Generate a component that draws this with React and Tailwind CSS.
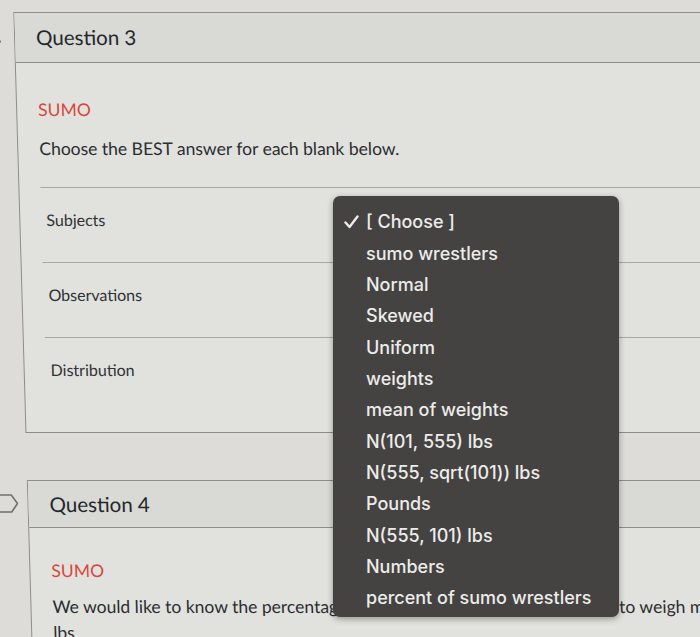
const MENU_ITEMS = [
  '[ Choose ]',
  'sumo wrestlers',
  'Normal',
  'Skewed',
  'Uniform',
  'weights',
  'mean of weights',
  'N(101, 555) lbs',
  'N(555, sqrt(101)) lbs',
  'Pounds',
  'N(555, 101) lbs',
  'Numbers',
  'percent of sumo wrestlers',
];

const ROWS = ['Subjects', 'Observations', 'Distribution'];

function Flag({ className }) {
  return (
    <svg width="30" height="19" viewBox="0 0 30 19" className={className}>
      <path d="M1 2.5 Q1 1 2.5 1 L23 1 L29 9.5 L23 18 L2.5 18 Q1 18 1 16.5 Z" fill="none" stroke="#6f6f6c" strokeWidth="1.6" />
    </svg>
  );
}

function QuestionHeader({ title, h }) {
  return (
    <div className={`${h} flex items-center px-[21px] bg-[#d9d9d5] border-b border-[#8d8d89] text-[20.5px] text-[#23282b]`}>
      {title}
    </div>
  );
}

export default function App() {
  return (
    <div className="relative h-[637px] w-[700px] overflow-hidden bg-[#dddcd8] font-['Lato',sans-serif]">
      <div className="origin-top-left skew-x-[1.65deg] pt-[12px]">
        {/* Question 3 */}
        <div className="flex">
          <div className="w-[13px] shrink-0 pt-[20px]">
            <Flag className="-ml-[30px]" />
          </div>
          <div className="w-[760px] shrink-0 border border-[#8d8d89] bg-[#e1e1dd]">
            <QuestionHeader title="Question 3" h="h-[50px]" />
            <div className="px-[21px] pt-[35px] pb-[19px]">
              <div className="text-[17.5px] leading-[24px] text-[#d8473d]">SUMO</div>
              <p className="mt-[15px] text-[17.5px] leading-[24px] text-[#2a2e31]">Choose the BEST answer for each blank below.</p>
              <div className="mt-[26px] border-t border-[#a8a8a4]">
                {ROWS.map((r, i) => (
                  <div key={r} className={`h-[75px] pl-[5px] pt-[21px] text-[16px] leading-[22px] text-[#2f3336] ${i < ROWS.length - 1 ? 'border-b border-[#a8a8a4]' : ''}`}>
                    {r}
                  </div>
                ))}
              </div>
            </div>
          </div>
        </div>

        {/* Question 4 */}
        <div className="mt-[47px] flex">
          <div className="w-[13px] shrink-0 pt-[14px]">
            <Flag className="-ml-[26px]" />
          </div>
          <div className="w-[760px] shrink-0 border border-[#8d8d89] bg-[#e1e1dd]">
            <QuestionHeader title="Question 4" h="h-[47px]" />
            <div className="px-[21px] pt-[31px]">
              <div className="text-[17.5px] leading-[24px] text-[#d8473d]">SUMO</div>
              <p className="mt-[12px] text-[17.5px] leading-[23px] text-[#2a2e31]">
                <span className="block whitespace-nowrap">
                  We would like to know the percentage of sumo wrestlers we expect them to weigh more than 600
                </span>
                <span className="mt-[3px] block">lbs</span>
              </p>
            </div>
          </div>
        </div>
      </div>

      {/* open select menu */}
      <div className="absolute left-[333px] top-[196px] h-[421px] w-[286px] rounded-[7px] bg-[#454341] pt-[10px] shadow-[0_2px_6px_rgba(0,0,0,0.35)] font-['Inter',sans-serif]">
        {MENU_ITEMS.map((item, i) => (
          <div key={item} className="flex h-[31.35px] items-center text-[18px] font-medium text-[#ececea]">
            <span className="flex w-[33px] pl-[11px]">
              {i === 0 && (
                <svg width="15" height="14" viewBox="0 0 15 14">
                  <path d="M1.5 7.5 L5.5 12 L13.5 1.5" fill="none" stroke="#ececea" strokeWidth="2.4" strokeLinecap="round" strokeLinejoin="round" />
                </svg>
              )}
            </span>
            <span>{item}</span>
          </div>
        ))}
      </div>
    </div>
  );
}
